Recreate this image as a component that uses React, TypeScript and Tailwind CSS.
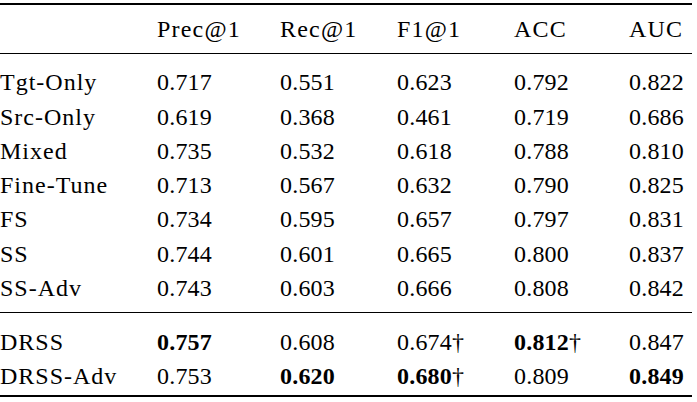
const headers = ['Prec@1', 'Rec@1', 'F1@1', 'ACC', 'AUC'];

type Cell = { v: string; bold?: boolean; dagger?: boolean };

const baseRows: { name: string; cells: Cell[] }[] = [
  { name: 'Tgt-Only', cells: [{ v: '0.717' }, { v: '0.551' }, { v: '0.623' }, { v: '0.792' }, { v: '0.822' }] },
  { name: 'Src-Only', cells: [{ v: '0.619' }, { v: '0.368' }, { v: '0.461' }, { v: '0.719' }, { v: '0.686' }] },
  { name: 'Mixed', cells: [{ v: '0.735' }, { v: '0.532' }, { v: '0.618' }, { v: '0.788' }, { v: '0.810' }] },
  { name: 'Fine-Tune', cells: [{ v: '0.713' }, { v: '0.567' }, { v: '0.632' }, { v: '0.790' }, { v: '0.825' }] },
  { name: 'FS', cells: [{ v: '0.734' }, { v: '0.595' }, { v: '0.657' }, { v: '0.797' }, { v: '0.831' }] },
  { name: 'SS', cells: [{ v: '0.744' }, { v: '0.601' }, { v: '0.665' }, { v: '0.800' }, { v: '0.837' }] },
  { name: 'SS-Adv', cells: [{ v: '0.743' }, { v: '0.603' }, { v: '0.666' }, { v: '0.808' }, { v: '0.842' }] },
];

const oursRows: { name: string; cells: Cell[] }[] = [
  {
    name: 'DRSS',
    cells: [{ v: '0.757', bold: true }, { v: '0.608' }, { v: '0.674', dagger: true }, { v: '0.812', bold: true, dagger: true }, { v: '0.847' }],
  },
  {
    name: 'DRSS-Adv',
    cells: [{ v: '0.753' }, { v: '0.620', bold: true }, { v: '0.680', bold: true, dagger: true }, { v: '0.809' }, { v: '0.849', bold: true }],
  },
];

const cols = 'grid grid-cols-[157px_123px_117px_117px_115px_63px]';

function Row({ name, cells }: { name: string; cells: Cell[] }) {
  return (
    <div className={`${cols} h-[34.3px] items-center leading-[34.3px]`}>
      <div className="tracking-[1px]">{name}</div>
      {cells.map((c, i) => (
        <div key={i} className="tracking-[0.2px]">
          <span className={c.bold ? 'font-bold' : ''}>{c.v}</span>
          {c.dagger && <span>†</span>}
        </div>
      ))}
    </div>
  );
}

export default function App() {
  return (
    <div className="min-h-[402px] bg-white pt-[3px] text-black">
      <div className="w-[692px] text-[24px] [font-family:'Liberation_Serif',serif]">
        <div className="h-[2px] bg-black" />
        <div className="pt-[7px] pb-[7px]">
          <div className={`${cols} h-[34.3px] items-center leading-[34.3px]`}>
            <div />
            {headers.map((h) => (
              <div key={h} className="tracking-[1.2px]">{h}</div>
            ))}
          </div>
        </div>
        <div className="h-px bg-black" />
        <div className="pt-[11px] pb-[7px]">
          {baseRows.map((r) => (
            <Row key={r.name} {...r} />
          ))}
        </div>
        <div className="h-px bg-black" />
        <div className="pt-[11.5px] pb-[2px]">
          {oursRows.map((r) => (
            <Row key={r.name} {...r} />
          ))}
        </div>
        <div className="h-[2px] bg-black" />
      </div>
    </div>
  );
}
